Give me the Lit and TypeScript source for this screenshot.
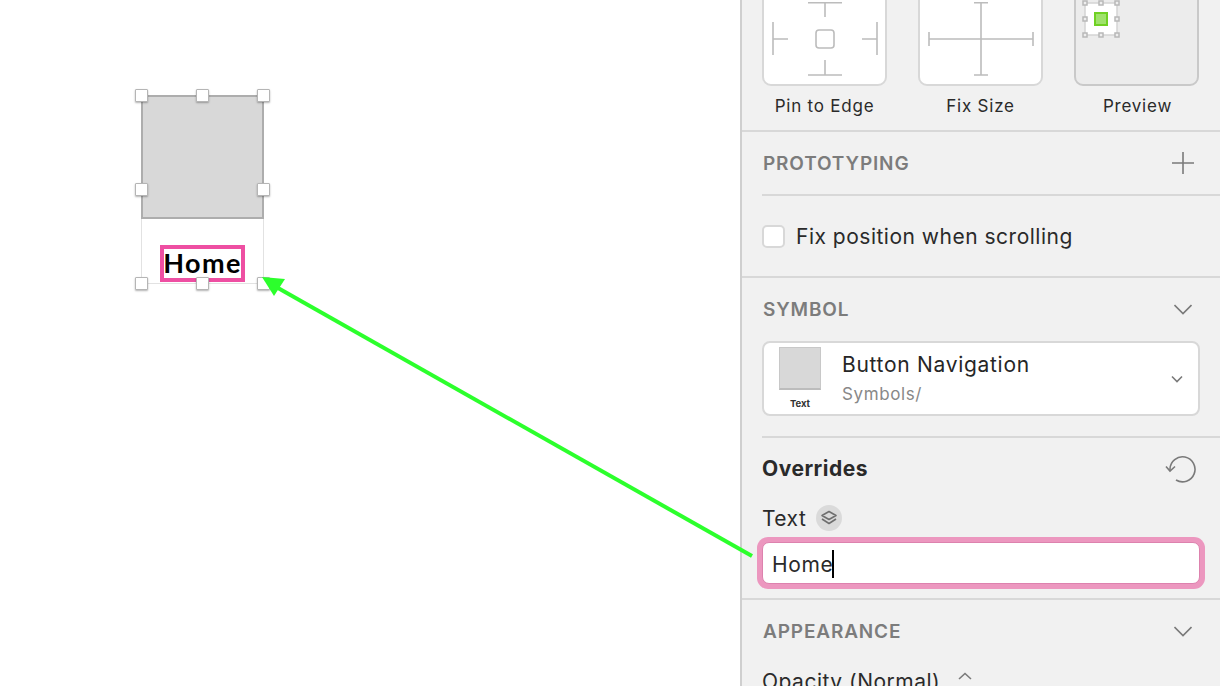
import { LitElement, html, css, svg } from "lit";
import { customElement } from "lit/decorators.js";

const HANDLES: [number, number][] = [
  [135, 89], [196, 89], [257, 89],
  [135, 183], [257, 183],
  [135, 277], [196, 277], [257, 277],
];

const PREVIEW_HANDLES: [number, number][] = [
  [1085, 3], [1101, 3], [1117, 3],
  [1085, 19], [1117, 19],
  [1085, 35], [1101, 35], [1117, 35],
];

@customElement("app-root")
export class AppRoot extends LitElement {
  static styles = css`
    :host {
      display: flex;
      width: 1220px;
      height: 686px;
      overflow: hidden;
      position: relative;
      font-family: Inter, "Liberation Sans", sans-serif;
      background: #fff;
      color: #262626;
    }
    .canvas { flex: 0 0 740px; position: relative; background: #fff; }
    .sym-rect {
      position: absolute; left: 141px; top: 95px; width: 123px; height: 124px;
      box-sizing: border-box; background: #d8d8d8; border: 2px solid #adadad;
    }
    .sym-outline {
      position: absolute; left: 141px; top: 219px; width: 123px; height: 65px;
      box-sizing: border-box; border: 1px solid #e2e2e2; border-top: none;
    }
    .sym-text {
      position: absolute; left: 160px; top: 245px; width: 85px; height: 37px;
      box-sizing: border-box; border: 4px solid #ee4fa2; background: #fff; padding-bottom: 2px;
      display: flex; align-items: center; justify-content: center;
      font-family: Lato, sans-serif; font-weight: 700; font-size: 27px; letter-spacing: 1.4px; color: #000;
    }
    .handle {
      position: absolute; width: 13px; height: 13px; box-sizing: border-box;
      background: #fff; border: 1px solid #b5b5b5; border-radius: 1px;
      box-shadow: 0 1px 2px rgba(0,0,0,.3);
    }
    .sidebar {
      flex: 1; box-sizing: border-box; border-left: 2px solid #cfcfcf; background: #f1f1f1;
      display: flex; flex-direction: column;
    }
    .resizing {
      margin-top: -35px; height: 167px; flex: none; box-sizing: border-box;
      border-bottom: 2px solid #d8d8d8; padding: 0 20px;
      display: flex; gap: 31px;
    }
    .resize-item { width: 125px; display: flex; flex-direction: column; align-items: center; }
    .card {
      width: 125px; height: 121px; box-sizing: border-box; background: #fff;
      border: 2px solid #d8d8d8; border-radius: 9px; overflow: hidden;
    }
    .card.preview { background: #ececec; border-color: #c9c9c9; }
    .card svg { display: block; }
    .resize-label { margin-top: 10px; font-size: 17px; line-height: 20px; letter-spacing: .78px; color: #2a2a2a; }
    .resize-label.shifted { padding-left: 2px; }
    .head {
      display: flex; align-items: center; justify-content: space-between;
      font-size: 19px; font-weight: 600; letter-spacing: .85px; color: #7c7c7c; line-height: 22px;
    }
    .head > span { padding-left: 1px; }
    .proto-head { height: 64px; flex: none; margin-left: 20px; padding: 2px 26px 0 0; border-bottom: 2px solid #d8d8d8; box-sizing: border-box; }
    .proto-head svg { margin-top: -2px; }
    .proto-body {
      height: 82px; flex: none; box-sizing: border-box; border-bottom: 2px solid #d8d8d8; padding: 0 20px;
      display: flex; align-items: center; gap: 11px; font-size: 21px; letter-spacing: .5px; color: #2a2a2a;
    }
    .check { width: 23px; height: 23px; box-sizing: border-box; background: #fff; border: 2px solid #d8d8d8; border-radius: 5px; }
    .symbol { margin-left: 20px; height: 160px; flex: none; box-sizing: border-box; border-bottom: 2px solid #d8d8d8; padding-right: 20px; }
    .symbol .head { height: 63px; padding-right: 8px; }
    .select {
      height: 75px; box-sizing: border-box; background: #fff; border: 2px solid #d8d8d8; border-radius: 8px;
      display: flex; align-items: center; padding: 0 15px 0 15px;
    }
    .thumb { width: 42px; display: flex; flex-direction: column; align-items: center; gap: 9px; margin-top: -1px; }
    .thumb-rect { width: 42px; height: 43px; box-sizing: border-box; background: #d8d8d8; border: 1px solid #c8c8c8; border-bottom: 2px solid #bcbcbc; }
    .thumb-text { font-size: 9.5px; line-height: 10px; font-weight: 700; color: #333; }
    .select-text { flex: 1; margin: -1px 0 0 21px; display: flex; flex-direction: column; gap: 5px; }
    .select-name { font-size: 21px; line-height: 26px; letter-spacing: .7px; color: #262626; }
    .select-path { font-size: 17px; line-height: 22px; letter-spacing: .6px; color: #888; }
    .overrides { height: 162px; flex: none; box-sizing: border-box; border-bottom: 2px solid #d8d8d8; padding: 0 15px; }
    .over-head {
      height: 63px; box-sizing: border-box; padding: 0 9px 2px 5px; display: flex; align-items: center; justify-content: space-between;
      font-size: 21px; font-weight: 700; letter-spacing: .5px; color: #2a2a2a;
    }
    .text-row { height: 35px; padding-left: 5px; display: flex; align-items: center; gap: 10px; font-size: 21px; letter-spacing: .45px; color: #2a2a2a; }
    .layers { width: 26px; height: 26px; border-radius: 50%; background: #dadada; display: flex; align-items: center; justify-content: center; margin-top: -2px; }
    .input-ring {
      width: 448px; height: 52px; box-sizing: border-box; border-radius: 11px; background: #ec97bf; padding: 5px; margin-top: 1px;
    }
    .input {
      height: 100%; box-sizing: border-box; background: #fff; border: 1.5px solid #dd82ae; border-radius: 7px;
      display: flex; align-items: center; padding: 2px 0 0 9px;
      font-size: 21px; letter-spacing: .6px; color: #2a2a2a;
    }
    .caret { width: 2px; height: 28px; background: #000; margin-left: -1px; }
    .appearance { padding: 0 20px; }
    .appearance .head { height: 62px; box-sizing: border-box; padding: 2px 8px 0 0; }
    .appearance .head svg { margin-top: -2px; }
    .opacity { display: flex; align-items: center; gap: 18px; margin-top: 7px; font-size: 21px; line-height: 26px; letter-spacing: .5px; color: #2a2a2a; }
    .opacity svg { margin-top: -12px; }
    .arrow { position: absolute; left: 0; top: 0; pointer-events: none; }
  `;

  private chevron() {
    return html`<svg width="18" height="11" viewBox="0 0 18 11" fill="none" stroke="#7a7a7a" stroke-width="1.6"><path d="M.5 1 L9 9.5 L17.5 1"/></svg>`;
  }

  render() {
    const pinIcon = svg`
      <g stroke="#bcbcbc" stroke-width="1.6" fill="none">
        <path d="M808 2.7H842M825 2.7V17"/>
        <path d="M773 22V55M773 39H788"/>
        <path d="M877 22V55M877 39H862"/>
        <path d="M808 75H842M825 75V60"/>
        <rect x="816" y="30" width="18" height="18" rx="3"/>
      </g>`;
    const fixIcon = svg`
      <g stroke="#bcbcbc" stroke-width="1.6" fill="none">
        <path d="M929 39H1033M929 32V46M1033 32V46"/>
        <path d="M981 3V75M974 2.7H988M974 75H988"/>
      </g>`;
    const previewIcon = svg`
      <rect x="1085" y="3" width="32" height="32" fill="#fff" stroke="#d4d4d4" stroke-width="1.5"/>
      <rect x="1095" y="13" width="12" height="12" fill="#9fe26c" stroke="#6fd123" stroke-width="2"/>
      ${PREVIEW_HANDLES.map(([x, y]) => svg`<rect x=${x - 2} y=${y - 2} width="4" height="4" fill="#eee" stroke="#b8b8b8" stroke-width="1.5"/>`)}`;

    return html`
      <div class="canvas">
        <div class="sym-rect"></div>
        <div class="sym-outline"></div>
        <div class="sym-text">Home</div>
        ${HANDLES.map(([x, y]) => html`<div class="handle" style="left:${x}px;top:${y}px"></div>`)}
      </div>
      <div class="sidebar">
        <div class="resizing">
          <div class="resize-item">
            <div class="card"><svg width="121" height="117" viewBox="764 -33 121 117">${pinIcon}</svg></div>
            <div class="resize-label">Pin to Edge</div>
          </div>
          <div class="resize-item">
            <div class="card"><svg width="121" height="117" viewBox="920 -33 121 117">${fixIcon}</svg></div>
            <div class="resize-label">Fix Size</div>
          </div>
          <div class="resize-item">
            <div class="card preview"><svg width="121" height="117" viewBox="1076 -33 121 117">${previewIcon}</svg></div>
            <div class="resize-label shifted">Preview</div>
          </div>
        </div>
        <div class="head proto-head">
          <span>PROTOTYPING</span>
          <svg width="22" height="22" viewBox="0 0 22 22" stroke="#7a7a7a" stroke-width="1.6"><path d="M11 0V22M0 11H22"/></svg>
        </div>
        <div class="proto-body"><span class="check"></span><span>Fix position when scrolling</span></div>
        <div class="symbol">
          <div class="head"><span>SYMBOL</span>${this.chevron()}</div>
          <div class="select">
            <div class="thumb"><div class="thumb-rect"></div><div class="thumb-text">Text</div></div>
            <div class="select-text">
              <div class="select-name">Button Navigation</div>
              <div class="select-path">Symbols/</div>
            </div>
            <svg width="12" height="8" viewBox="0 0 12 8" fill="none" stroke="#7a7a7a" stroke-width="1.6"><path d="M1 1.5 L6 6.5 L11 1.5"/></svg>
          </div>
        </div>
        <div class="overrides">
          <div class="over-head">
            <span>Overrides</span>
            <svg width="31" height="28" viewBox="0 0 31 28" fill="none" stroke="#7a7a7a" stroke-width="1.6">
              <path d="M5 15 V14 A12.5 12.5 0 1 1 11 25"/>
              <path d="M1 11.5 L5 16 L10 11.5"/>
            </svg>
          </div>
          <div class="text-row">
            <span>Text</span>
            <span class="layers">
              <svg width="18" height="16" viewBox="0 0 18 16" fill="none" stroke="#6f6f6f" stroke-width="1.6" stroke-linejoin="round">
                <path d="M9 1.5 L16 5.5 L9 9.5 L2 5.5 Z"/>
                <path d="M2 9 L9 13.5 L16 9"/>
              </svg>
            </span>
          </div>
          <div class="input-ring"><div class="input"><span>Home</span><span class="caret"></span></div></div>
        </div>
        <div class="appearance">
          <div class="head"><span>APPEARANCE</span>${this.chevron()}</div>
          <div class="opacity">
            <span>Opacity (Normal)</span>
            <svg width="14" height="8" viewBox="0 0 14 8" fill="none" stroke="#7a7a7a" stroke-width="1.6"><path d="M1 7 L7 1.5 L13 7"/></svg>
          </div>
        </div>
      </div>
      <svg class="arrow" width="1220" height="686" viewBox="0 0 1220 686">
        <line x1="752" y1="556" x2="278" y2="288" stroke="#2cff2c" stroke-width="4"/>
        <path d="M262 277 L285 279 L274 296 Z" fill="#2cff2c"/>
      </svg>
    `;
  }
}
